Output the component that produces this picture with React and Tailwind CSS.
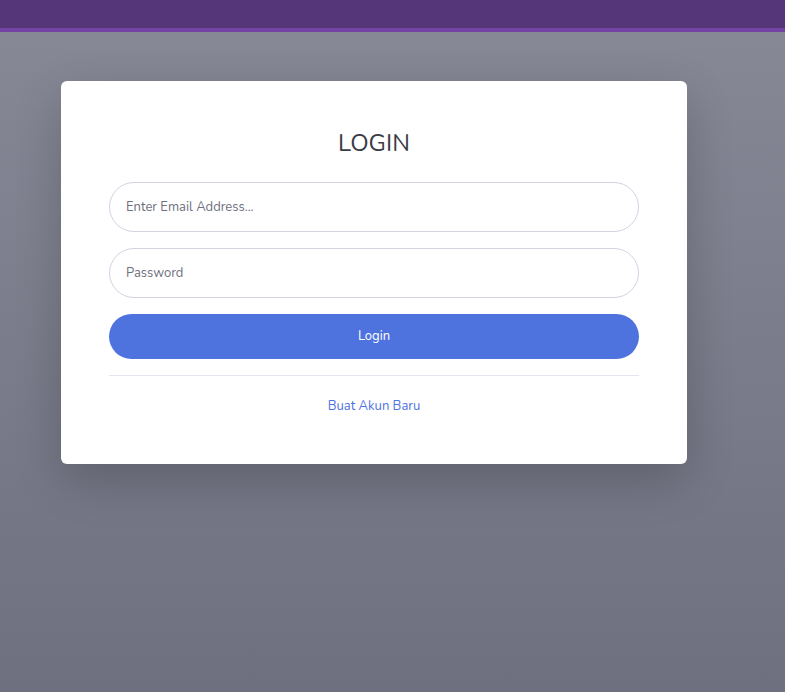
export default function App() {
  const font = { fontFamily: "Nunito, Lato, 'Open Sans', sans-serif" };
  return (
    <div className="h-[692px] w-full flex flex-col overflow-hidden" style={font}>
      <div className="h-[28px] bg-[#553679] shrink-0" />
      <div className="h-[4px] bg-[#7343a5] shrink-0" />
      <div className="flex-1 bg-gradient-to-b from-[#878896] to-[#6e7080] pt-[49px] pl-[61px]">
        <div className="w-[626px] bg-white rounded-[6px] shadow-[0_1rem_3rem_rgba(0,0,0,0.2)] px-12 pt-12 pb-[48px]">
          <h1 className="text-center text-[24px] leading-[1.2] text-[#3a3b45] font-normal mb-[24px]">LOGIN</h1>
          <div className="flex flex-col gap-4">
            <input
              className="w-full h-[50px] rounded-full border border-[#d1d3e2] px-4 text-[13px] text-[#6e707e] placeholder:text-[#6e707e] outline-none"
              placeholder="Enter Email Address..."
            />
            <input
              type="password"
              className="w-full h-[50px] rounded-full border border-[#d1d3e2] px-4 text-[13px] text-[#6e707e] placeholder:text-[#6e707e] outline-none"
              placeholder="Password"
            />
            <button className="w-full h-[45px] rounded-full bg-[#4e73df] text-white text-[13px]">Login</button>
          </div>
          <hr className="my-4 border-t border-[#e3e6f0]" />
          <div className="text-center text-[13px] leading-[1.5] text-[#4e73df] pt-[5px]">Buat Akun Baru</div>
        </div>
      </div>
    </div>
  );
}
